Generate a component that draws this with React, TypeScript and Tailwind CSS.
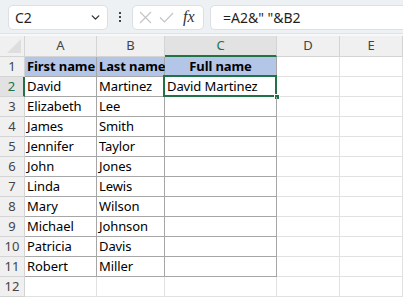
import { ChevronDown } from "lucide-react";

const rows: [string, string, string][] = [
  ["First name", "Last name", "Full name"],
  ["David", "Martinez", "David Martinez"],
  ["Elizabeth", "Lee", ""],
  ["James", "Smith", ""],
  ["Jennifer", "Taylor", ""],
  ["John", "Jones", ""],
  ["Linda", "Lewis", ""],
  ["Mary", "Wilson", ""],
  ["Michael", "Johnson", ""],
  ["Patricia", "Davis", ""],
  ["Robert", "Miller", ""],
  ["", "", ""],
];

const cols = ["A", "B", "C", "D", "E"];

function FormulaBar() {
  return (
    <div className="flex h-[34px] items-center gap-[6px] border-b border-[#dfe3e8] bg-[#eef1f4] pl-2 pt-[1px]">
      <div className="flex h-[25px] w-[100px] items-center justify-between rounded-[5px] border border-[#dcdfe3] bg-white pl-[6px] pr-[5px] text-[14px] text-[#1f1f1f]">
        <span>C2</span>
        <ChevronDown size={13} strokeWidth={2.5} className="text-[#333]" />
      </div>
      <div className="flex w-[12px] flex-col items-center gap-[2px]">
        <span className="h-[2px] w-[2px] bg-[#444]" />
        <span className="h-[2px] w-[2px] bg-[#444]" />
        <span className="h-[2px] w-[2px] bg-[#444]" />
      </div>
      <div className="flex h-[25px] w-[72px] items-center gap-[7px] rounded-[5px] border border-[#dcdfe3] bg-white pl-[6px]">
        <svg width="13" height="13" viewBox="0 0 13 13" className="text-[#c4c4c4]">
          <path d="M1 1L12 12M12 1L1 12" stroke="currentColor" strokeWidth="1.2" fill="none" />
        </svg>
        <svg width="15" height="11" viewBox="0 0 15 11" className="text-[#c4c4c4]">
          <path d="M1 5.5L5.5 10L14 1" stroke="currentColor" strokeWidth="1.2" fill="none" />
        </svg>
        <span className="ml-[2px] font-['Liberation_Serif',serif] text-[16px] italic leading-none text-[#333]">
          fx
        </span>
      </div>
      <div className="flex h-[25px] flex-1 items-center rounded-l-[5px] border border-r-0 border-[#dcdfe3] bg-white pl-[12px] text-[14px] text-[#1f1f1f]">
        =A2&amp;" "&amp;B2
      </div>
    </div>
  );
}

export default function App() {
  return (
    <div className="h-[297px] w-[403px] overflow-hidden bg-white font-['Noto_Sans',sans-serif]">
      <FormulaBar />
      <div className="h-[2px] bg-[#f7f8f9]" />
      <div className="grid grid-cols-[25px_72px_68px_112px_63px_63px] grid-rows-[21px]">
        <div className="relative border-b border-r border-[#d4d4d4] bg-[#f0f0f0]">
          <svg width="14" height="14" viewBox="0 0 14 14" className="absolute bottom-[3px] right-[3px]">
            <path d="M14 0V14H0Z" fill="#dedede" />
          </svg>
        </div>
        {cols.map((c) => (
          <div
            key={c}
            className={
              c === "C"
                ? "flex items-center justify-center border-b-2 border-r border-b-[#217346] border-r-[#d4d4d4] bg-[#e2e2e2] text-[13px] text-[#217346]"
                : "flex items-center justify-center border-b border-r border-[#d4d4d4] bg-[#f0f0f0] text-[13px] text-[#444]"
            }
          >
            {c}
          </div>
        ))}
        {rows.map((r, i) => {
          const n = i + 1;
          const inTable = n <= 11;
          const header = n === 1;
          return [
            <div
              key={`h${n}`}
              className={
                n === 2
                  ? "flex h-[20px] items-center justify-center border-b border-r-2 border-b-[#d4d4d4] border-r-[#217346] bg-[#e2e2e2] text-[13px] text-[#217346]"
                  : "flex h-[20px] items-center justify-center border-b border-r border-[#d4d4d4] bg-[#f0f0f0] text-[13px] text-[#444]"
              }
            >
              {n}
            </div>,
            ...r.map((v, j) => {
              const selected = n === 2 && j === 2;
              let cls = "relative flex h-[20px] items-center whitespace-nowrap border-b border-r px-[2px] text-[13px] tracking-[-0.1px] text-black";
              cls += inTable ? " border-[#a6a6a6]" : " border-[#e1e1e1]";
              if (header) cls += " bg-[#b4c6e7] font-bold" + (j === 2 ? " justify-center" : "");
              return (
                <div key={`c${n}${j}`} className={cls}>
                  {v}
                  {selected && (
                    <>
                      <div className="pointer-events-none absolute -left-[2px] -top-[2px] bottom-[-1px] right-[-1px] border-2 border-[#217346]" />
                      <div className="absolute -bottom-[4px] -right-[4px] h-[6px] w-[6px] border border-white bg-[#217346]" />
                    </>
                  )}
                </div>
              );
            }),
            <div key={`d${n}`} className="h-[20px] border-b border-r border-[#e1e1e1]" />,
            <div key={`e${n}`} className="h-[20px] border-b border-r border-[#e1e1e1]" />,
          ];
        })}
      </div>
    </div>
  );
}
